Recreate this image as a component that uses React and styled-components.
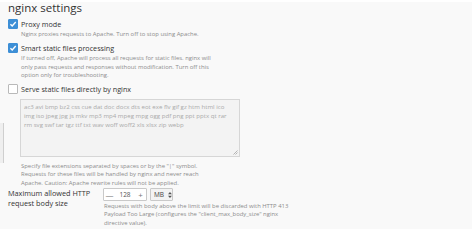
import React from "react";
import styled, { createGlobalStyle } from "styled-components";

const GlobalStyle = createGlobalStyle`
  html, body { margin: 0; padding: 0; background: #ffffff; }
  body { font-family: "Open Sans", "Noto Sans", sans-serif; }
  * { box-sizing: border-box; }
`;

const Panel = styled.section`
  position: relative;
  margin-top: 2px;
  width: 472px;
  height: 227px;
  background: #f9f9f9;
  padding: 0 8px;
  overflow: hidden;
`;

const Heading = styled.h2`
  margin: 0;
  font-size: 11.5px;
  line-height: 12px;
  font-weight: 400;
  color: #333;
`;

const Option = styled.div`
  margin-top: ${(p) => p.$top}px;
`;

const CheckRow = styled.label`
  display: flex;
  align-items: center;
  gap: 3px;
  height: 10px;
`;

const Box = styled.span`
  flex: none;
  width: 10px;
  height: 10px;
  border-radius: 1px;
  display: flex;
  align-items: center;
  justify-content: center;
  background: ${(p) => (p.$checked ? "#3d8fd6" : "#ffffff")};
  border: 1px solid ${(p) => (p.$checked ? "#3d8fd6" : "#b9b9b9")};
`;

const Label = styled.span`
  font-size: 7.2px;
  line-height: 10px;
  color: #333;
`;

const Hint = styled.div`
  margin-top: ${(p) => p.$top || 0}px;
  padding-left: ${(p) => p.$left ?? 13}px;
  white-space: nowrap;
  font-size: 5.9px;
  line-height: 8.3px;
  color: #8c8c8c;
`;

const TextArea = styled.div`
  margin: 5px 0 0 12px;
  width: 220px;
  height: 58px;
  position: relative;
  background: #f3f3f3;
  border: 1px solid #d6d6d6;
  padding: 3px 3px;
  font-size: 6.1px;
  line-height: 8.8px;
  color: #a9a9a9;
`;

const Grip = styled.svg`
  position: absolute;
  right: 1px;
  bottom: 1px;
`;

const FieldRow = styled.div`
  display: grid;
  grid-template-columns: 95px 1fr;
  margin-top: 1px;
`;

const FieldLabel = styled.div`
  font-size: 7.3px;
  line-height: 10px;
  color: #333;
`;

const Controls = styled.div`
  display: flex;
  align-items: center;
  gap: 3px;
`;

const Stepper = styled.div`
  display: flex;
  align-items: center;
  width: 44px;
  height: 13px;
  background: #fff;
  border: 1px solid #c9c9c9;
  border-radius: 1px;
  font-size: 6.5px;
  color: #555;
`;

const StepBtn = styled.span`
  width: 11px;
  text-align: center;
  font-size: 8px;
  line-height: 11px;
  color: #777;
`;

const StepValue = styled.span`
  flex: 1;
  text-align: center;
  line-height: 11px;
`;

const Select = styled.div`
  display: flex;
  align-items: center;
  gap: 4px;
  width: 23px;
  height: 13px;
  padding-left: 3px;
  background: #f3f3f3;
  border: 1px solid #c9c9c9;
  border-radius: 1px;
  font-size: 6.5px;
  color: #444;
`;

const SideTab = styled.div`
  position: absolute;
  left: 0;
  top: 121px;
  width: 4px;
  height: 40px;
  background: #efefef;
  border-right: 1px solid #cfcfcf;
`;

function Check({ checked }) {
  return (
    <Box $checked={checked}>
      {checked && (
        <svg width="8" height="8" viewBox="0 0 10 10">
          <path d="M1.8 5.2 L4 7.4 L8.4 2.6" fill="none" stroke="#fff" strokeWidth="1.7" />
        </svg>
      )}
    </Box>
  );
}

export default function App() {
  return (
    <>
      <GlobalStyle />
      <Panel>
        <Heading>nginx settings</Heading>
        <Option $top={5}>
          <CheckRow>
            <Check checked />
            <Label>Proxy mode</Label>
          </CheckRow>
          <Hint $top={1}>Nginx proxies requests to Apache. Turn off to stop using Apache.</Hint>
        </Option>
        <Option $top={5}>
          <CheckRow>
            <Check checked />
            <Label>Smart static files processing</Label>
          </CheckRow>
          <Hint $top={1}>
            If turned off, Apache will process all requests for static files. nginx will
            <br />
            only pass requests and responses without modification. Turn off this
            <br />
            option only for troubleshooting.
          </Hint>
        </Option>
        <Option $top={5}>
          <CheckRow>
            <Check />
            <Label>Serve static files directly by nginx</Label>
          </CheckRow>
          <TextArea>
            ac3 avi bmp bz2 css cue dat doc docx dts eot exe flv gif gz htm html ico img iso jpeg jpg js mkv mp3 mp4 mpeg mpg ogg pdf png ppt pptx qt rar rm svg swf tar tgz ttf txt wav woff woff2 xls xlsx zip webp
            <Grip width="5" height="5" viewBox="0 0 5 5">
              <path d="M4.5 0.5 L0.5 4.5 M4.5 2.5 L2.5 4.5" stroke="#999" strokeWidth="0.7" />
            </Grip>
          </TextArea>
          <Hint $top={5}>
            Specify file extensions separated by spaces or by the "|" symbol.
            <br />
            Requests for these files will be handled by nginx and never reach
            <br />
            Apache. Caution: Apache rewrite rules will not be applied.
          </Hint>
        </Option>
        <FieldRow>
          <FieldLabel>
            Maximum allowed HTTP
            <br />
            request body size
          </FieldLabel>
          <div>
            <Controls>
              <Stepper>
                <StepBtn>—</StepBtn>
                <StepValue>128</StepValue>
                <StepBtn>+</StepBtn>
              </Stepper>
              <Select>
                MB
                <svg width="4" height="6" viewBox="0 0 4 6">
                  <path d="M2 0 L4 2.3 L0 2.3 Z M2 6 L4 3.7 L0 3.7 Z" fill="#555" />
                </svg>
              </Select>
            </Controls>
            <Hint $top={1} $left={1}>
              Requests with body above the limit will be discarded with HTTP 413
              <br />
              Payload Too Large (configures the "client_max_body_size" nginx
              <br />
              directive value).
            </Hint>
          </div>
        </FieldRow>
        <SideTab />
      </Panel>
    </>
  );
}
